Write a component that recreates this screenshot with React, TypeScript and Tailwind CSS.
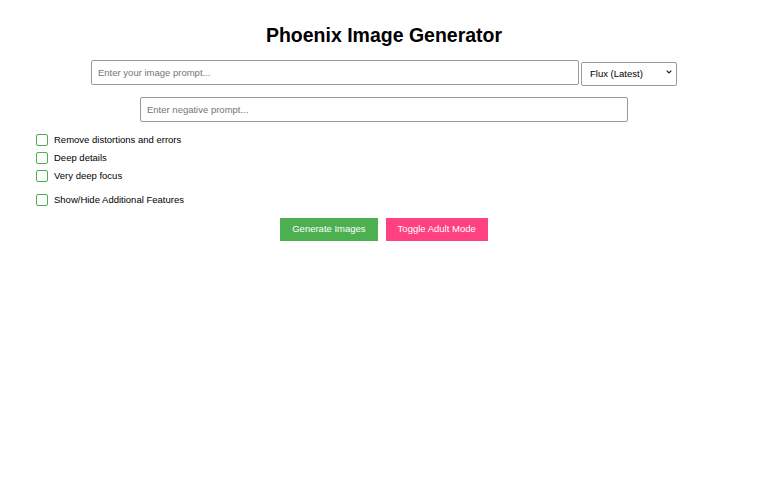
import { useState } from "react";

const opciones = [
  "Remove distortions and errors",
  "Deep details",
  "Very deep focus",
];

function Casilla({ label, checked, onToggle }: { label: string; checked: boolean; onToggle: () => void }) {
  return (
    <label className="flex items-center gap-[6px] h-[18px] cursor-pointer">
      <span
        onClick={onToggle}
        className={`w-[12px] h-[12px] border border-[#4caf50] rounded-[2px] flex items-center justify-center ${
          checked ? "bg-[#4caf50]" : "bg-white"
        }`}
      />
      <span className="text-[9.5px] text-black">{label}</span>
    </label>
  );
}

export default function App() {
  const [prompt, setPrompt] = useState("");
  const [negativo, setNegativo] = useState("");
  const [modelo, setModelo] = useState("flux");
  const [marcadas, setMarcadas] = useState<boolean[]>([false, false, false]);
  const [extras, setExtras] = useState(false);

  const toggle = (i: number) =>
    setMarcadas((m) => m.map((v, j) => (j === i ? !v : v)));

  return (
    <div className="min-h-[480px] bg-white px-[36px] font-['Liberation_Sans',Arial,sans-serif] text-black">
      <h1 className="pt-[24px] text-center text-[19.5px] leading-[22px] font-bold">
        Phoenix Image Generator
      </h1>

      <div className="mt-[14px] flex justify-center gap-[2px]">
        <input
          value={prompt}
          onChange={(e) => setPrompt(e.target.value)}
          placeholder="Enter your image prompt..."
          className="w-[488px] h-[25px] border border-[#999] rounded-[2px] px-[6px] text-[9.5px] placeholder:text-[#757575] outline-none"
        />
        <div className="relative w-[96px] h-[24px]">
          <select
            value={modelo}
            onChange={(e) => setModelo(e.target.value)}
            className="appearance-none w-full h-full border border-[#999] rounded-[2px] pl-[8px] text-[9.5px] bg-white outline-none"
          >
            <option value="flux">Flux (Latest)</option>
            <option value="turbo">Turbo</option>
          </select>
          <svg
            className="absolute right-[5px] top-[10px] pointer-events-none"
            width="6"
            height="4"
            viewBox="0 0 6 4"
          >
            <polyline points="0.7,0.7 3,3 5.3,0.7" fill="none" stroke="#222" strokeWidth="1.2" />
          </svg>
        </div>
      </div>

      <div className="mt-[12px] flex justify-center">
        <input
          value={negativo}
          onChange={(e) => setNegativo(e.target.value)}
          placeholder="Enter negative prompt..."
          className="w-[488px] h-[25px] border border-[#999] rounded-[2px] px-[6px] text-[9.5px] placeholder:text-[#757575] outline-none"
        />
      </div>

      <div className="mt-[9px] flex flex-col">
        {opciones.map((o, i) => (
          <Casilla key={o} label={o} checked={marcadas[i]} onToggle={() => toggle(i)} />
        ))}
        <div className="mt-[6px]">
          <Casilla label="Show/Hide Additional Features" checked={extras} onToggle={() => setExtras(!extras)} />
        </div>
      </div>

      <div className="mt-[9px] flex justify-center gap-[8px]">
        <button className="h-[23px] px-[12px] bg-[#4caf50] text-white text-[9.5px]">
          Generate Images
        </button>
        <button className="h-[23px] px-[12px] bg-[#ff4081] text-white text-[9.5px]">
          Toggle Adult Mode
        </button>
      </div>
    </div>
  );
}
